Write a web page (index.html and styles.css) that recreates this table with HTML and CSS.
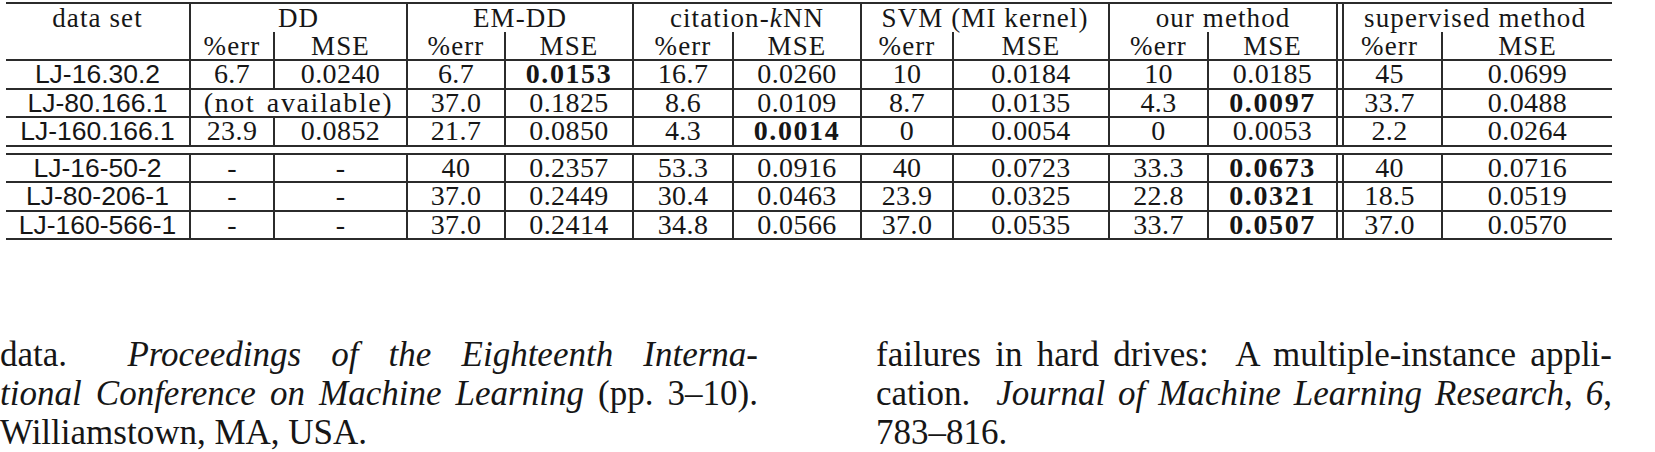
FILE: index.html
```html
<!DOCTYPE html>
<html lang="en">
<head>
<meta charset="utf-8">
<title>Results table</title>
<link rel="stylesheet" href="styles.css">
</head>
<body>
<div class="page">
  <table class="results">
    <colgroup>
      <col class="w-ds"><col class="w-c2"><col class="w-c3"><col class="w-c4"><col class="w-c5"><col class="w-c6"><col class="w-c7"><col class="w-c8"><col class="w-c9"><col class="w-c10"><col class="w-c11"><col class="w-c12"><col class="w-c13">
    </colgroup>
    <thead>
      <tr class="hrow1">
        <th class="ds">data set</th>
        <th colspan="2" class="vl">DD</th>
        <th colspan="2" class="vl">EM-DD</th>
        <th colspan="2" class="vl">citation-<i>k</i>NN</th>
        <th colspan="2" class="vl">SVM (MI kernel)</th>
        <th colspan="2" class="vl">our method</th>
        <th colspan="2" class="vl dbl">supervised method</th>
      </tr>
      <tr class="hrow2">
        <th class="ds"></th>
        <th class="vl">%err</th><th class="vl">MSE</th>
        <th class="vl">%err</th><th class="vl">MSE</th>
        <th class="vl">%err</th><th class="vl">MSE</th>
        <th class="vl">%err</th><th class="vl">MSE</th>
        <th class="vl">%err</th><th class="vl">MSE</th>
        <th class="vl dbl">%err</th><th class="vl">MSE</th>
      </tr>
    </thead>
    <tbody>
      <tr>
        <td class="ds">LJ-16.30.2</td>
        <td class="vl">6.7</td><td class="vl">0.0240</td>
        <td class="vl">6.7</td><td class="vl"><b>0.0153</b></td>
        <td class="vl">16.7</td><td class="vl">0.0260</td>
        <td class="vl">10</td><td class="vl">0.0184</td>
        <td class="vl">10</td><td class="vl">0.0185</td>
        <td class="vl dbl">45</td><td class="vl">0.0699</td>
      </tr>
      <tr>
        <td class="ds">LJ-80.166.1</td>
        <td class="vl na" colspan="2">(not available)</td>
        <td class="vl">37.0</td><td class="vl">0.1825</td>
        <td class="vl">8.6</td><td class="vl">0.0109</td>
        <td class="vl">8.7</td><td class="vl">0.0135</td>
        <td class="vl">4.3</td><td class="vl"><b>0.0097</b></td>
        <td class="vl dbl">33.7</td><td class="vl">0.0488</td>
      </tr>
      <tr>
        <td class="ds">LJ-160.166.1</td>
        <td class="vl">23.9</td><td class="vl">0.0852</td>
        <td class="vl">21.7</td><td class="vl">0.0850</td>
        <td class="vl">4.3</td><td class="vl"><b>0.0014</b></td>
        <td class="vl">0</td><td class="vl">0.0054</td>
        <td class="vl">0</td><td class="vl">0.0053</td>
        <td class="vl dbl">2.2</td><td class="vl">0.0264</td>
      </tr>
    </tbody>
    <tbody class="gap">
      <tr><td colspan="13"></td></tr>
    </tbody>
    <tbody>
      <tr>
        <td class="ds">LJ-16-50-2</td>
        <td class="vl">-</td><td class="vl">-</td>
        <td class="vl">40</td><td class="vl">0.2357</td>
        <td class="vl">53.3</td><td class="vl">0.0916</td>
        <td class="vl">40</td><td class="vl">0.0723</td>
        <td class="vl">33.3</td><td class="vl"><b>0.0673</b></td>
        <td class="vl dbl">40</td><td class="vl">0.0716</td>
      </tr>
      <tr>
        <td class="ds">LJ-80-206-1</td>
        <td class="vl">-</td><td class="vl">-</td>
        <td class="vl">37.0</td><td class="vl">0.2449</td>
        <td class="vl">30.4</td><td class="vl">0.0463</td>
        <td class="vl">23.9</td><td class="vl">0.0325</td>
        <td class="vl">22.8</td><td class="vl"><b>0.0321</b></td>
        <td class="vl dbl">18.5</td><td class="vl">0.0519</td>
      </tr>
      <tr>
        <td class="ds">LJ-160-566-1</td>
        <td class="vl">-</td><td class="vl">-</td>
        <td class="vl">37.0</td><td class="vl">0.2414</td>
        <td class="vl">34.8</td><td class="vl">0.0566</td>
        <td class="vl">37.0</td><td class="vl">0.0535</td>
        <td class="vl">33.7</td><td class="vl"><b>0.0507</b></td>
        <td class="vl dbl">37.0</td><td class="vl">0.0570</td>
      </tr>
    </tbody>
  </table>

  <div class="refs">
    <div class="refcol left">
      <span class="line just">data.&nbsp; <i>Proceedings of the Eighteenth Interna-</i></span>
      <span class="line just"><i>tional Conference on Machine Learning</i> (pp. 3–10).</span>
      <span class="line">Williamstown, MA, USA.</span>
    </div>
    <div class="refcol right">
      <span class="line just">failures in hard drives:&nbsp; A multiple-instance appli-</span>
      <span class="line just">cation.&nbsp; <i>Journal of Machine Learning Research</i>, <i>6</i>,</span>
      <span class="line">783–816.</span>
    </div>
  </div>
</div>
</body>
</html>
```

FILE: styles.css
```css
html, body {
  margin: 0;
  padding: 0;
  background: #ffffff;
}

.page {
  width: 1655px;
  height: 452px;
  overflow: hidden;
  padding-top: 2px;
  box-sizing: border-box;
  color: #161616;
  font-family: "Liberation Serif", "Times New Roman", serif;
}

/* ---------- table ---------- */
.results {
  margin-left: 6px;
  width: 1606px;
  table-layout: fixed;
  border-collapse: separate;
  border-spacing: 0;
  border-top: 2px solid #2b2b2b;
  font-size: 28px;
  letter-spacing: 0.4px;
}

.w-ds  { width: 183px; }
.w-c2  { width: 84px; }
.w-c3  { width: 133px; }
.w-c4  { width: 98px; }
.w-c5  { width: 128px; }
.w-c6  { width: 100px; }
.w-c7  { width: 128px; }
.w-c8  { width: 92px; }
.w-c9  { width: 156px; }
.w-c10 { width: 99px; }
.w-c11 { width: 129px; }
.w-c12 { width: 105px; }
.w-c13 { width: 171px; }

.results th,
.results td {
  box-sizing: border-box;
  padding: 0;
  text-align: center;
  vertical-align: middle;
  font-weight: normal;
  line-height: 22px;
  white-space: nowrap;
}

.results th {
  font-size: 27px;
  letter-spacing: 1.1px;
}

.results .vl {
  border-left: 2px solid #2b2b2b;
}

.results .dbl {
  background: linear-gradient(to right, transparent 4px, #2b2b2b 4px, #2b2b2b 6px, transparent 6px) no-repeat;
}

.hrow1 th {
  height: 28px;
  vertical-align: top;
  padding-top: 3px;
}

.hrow2 th {
  height: 29px;
  vertical-align: bottom;
  padding-bottom: 2px;
  border-bottom: 2px solid #2b2b2b;
}

.results tbody td {
  height: 28.5px;
  border-bottom: 2px solid #2b2b2b;
}

.results td.na {
  letter-spacing: 1.6px;
  word-spacing: 3px;
}

.results tbody.gap td {
  height: 8px;
  padding: 0;
  line-height: 0;
}

.results .ds {
  font-family: "Liberation Sans", Arial, sans-serif;
  font-size: 26.5px;
  letter-spacing: 0;
}

.results th.ds {
  font-family: "Liberation Serif", "Times New Roman", serif;
  font-size: 27px;
  letter-spacing: 1.1px;
}

.results b {
  font-weight: bold;
  letter-spacing: 1.6px;
}

/* ---------- references ---------- */
.refs {
  display: flex;
  margin-top: 95px;
  font-size: 35px;
  line-height: 39px;
  color: #161616;
}

.refcol {
  display: flex;
  flex-direction: column;
}

.refcol.left {
  width: 758px;
}

.refcol.right {
  width: 736px;
  margin-left: 118px;
}

.line {
  display: block;
  white-space: nowrap;
}

.line.just {
  text-align: justify;
  text-align-last: justify;
}
```
